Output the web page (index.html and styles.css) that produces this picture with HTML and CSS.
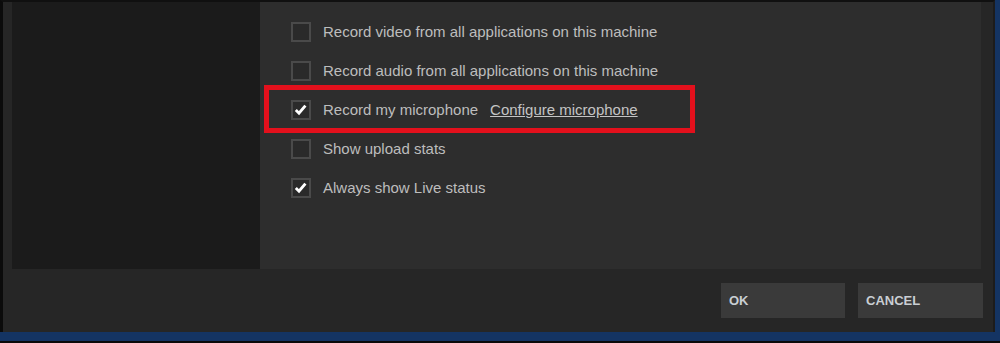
FILE: index.html
```html
<!DOCTYPE html>
<html lang="en">
<head>
    <meta charset="UTF-8">
    <title>Broadcast settings</title>
    <link rel="stylesheet" href="styles.css">
</head>
<body>
    <div class="dialog">
        <div class="panels">
            <div class="sidebar"></div>
            <div class="content">
                <div class="option">
                    <span class="check"></span>
                    <span class="label">Record video from all applications on this machine</span>
                </div>
                <div class="option">
                    <span class="check"></span>
                    <span class="label">Record audio from all applications on this machine</span>
                </div>
                <div class="option highlighted">
                    <span class="check checked">
                        <svg viewBox="0 0 20 20"><path d="M3.5 10 L7.5 14 L15.5 4.5" /></svg>
                    </span>
                    <span class="label">Record my microphone</span>
                    <a class="link" href="#">Configure microphone</a>
                    <span class="marker"></span>
                </div>
                <div class="option">
                    <span class="check"></span>
                    <span class="label">Show upload stats</span>
                </div>
                <div class="option">
                    <span class="check checked">
                        <svg viewBox="0 0 20 20"><path d="M3.5 10 L7.5 14 L15.5 4.5" /></svg>
                    </span>
                    <span class="label">Always show Live status</span>
                </div>
            </div>
        </div>
        <div class="footer">
            <button class="btn ok">OK</button>
            <button class="btn cancel">CANCEL</button>
        </div>
    </div>
</body>
</html>
```

FILE: styles.css
```css
* {
    box-sizing: border-box;
}
body {
    margin: 0;
    height: 343px;
    overflow: hidden;
    background-color: #143463;
    font-family: "Liberation Sans", Arial, sans-serif;
    border-bottom: 2px solid #0a0a0a;
}
.dialog {
    width: 995px;
    height: 332px;
    background-color: #262626;
    border-left: 3px solid #0b0b0b;
    border-top: 2px solid #101010;
    border-right: 2px solid #1c1c1c;
    padding-left: 9px;
    display: flex;
    flex-direction: column;
}
.panels {
    display: flex;
    width: 969px;
    height: 267px;
}
.sidebar {
    width: 248px;
    background-color: #1b1b1b;
}
.content {
    flex: 1;
    background-color: #2d2d2d;
    padding: 10px 0 0 31px;
}
.option {
    position: relative;
    display: flex;
    align-items: center;
    height: 39px;
}
.check {
    width: 20px;
    height: 20px;
    border: 2px solid #4a4a4a;
    background-color: #2a2a2a;
    margin-right: 12px;
    flex-shrink: 0;
}
.check svg {
    display: block;
    width: 16px;
    height: 16px;
    fill: none;
    stroke: #ffffff;
    stroke-width: 3.6;
}
.label {
    font-size: 15px;
    color: #bdbdbd;
}
.link {
    font-size: 15px;
    color: #c4c4c4;
    margin-left: 12px;
    text-decoration: underline;
}
.marker {
    position: absolute;
    left: -27px;
    top: -5px;
    width: 431px;
    height: 48px;
    border: 5px solid #e3101c;
}
.footer {
    display: flex;
    justify-content: flex-end;
    gap: 13px;
    padding: 14px 10px 0 0;
}
.btn {
    height: 35px;
    background-color: #3a3a3a;
    border: none;
    color: #c9ced3;
    font-family: "Liberation Sans", Arial, sans-serif;
    font-size: 13px;
    font-weight: bold;
    text-align: left;
    padding: 0 0 0 8px;
}
.ok {
    width: 124px;
}
.cancel {
    width: 125px;
}
```
